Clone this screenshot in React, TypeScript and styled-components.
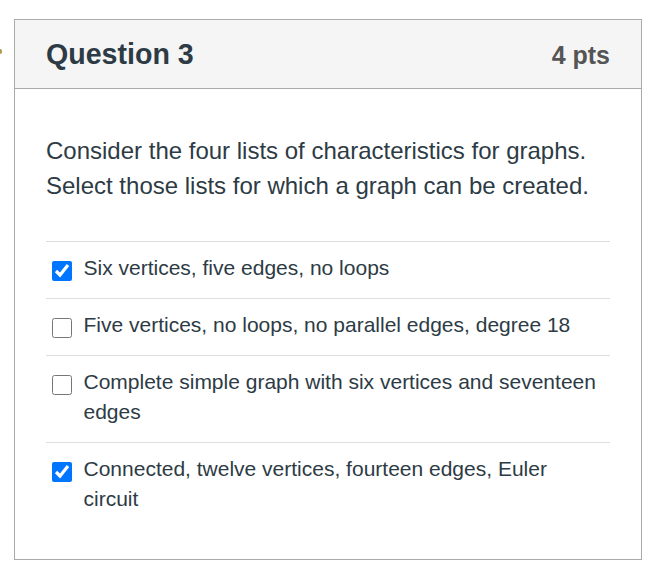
import styled, { createGlobalStyle } from "styled-components";

const GlobalStyle = createGlobalStyle`
  html, body {
    margin: 0;
    padding: 0;
    background: #ffffff;
  }
  body {
    font-family: "Liberation Sans", Arial, sans-serif;
    color: #2d3b45;
  }
`;

const Page = styled.div`
  position: relative;
  width: 658px;
  height: 574px;
  padding: 19px 16px 0 14px;
  box-sizing: border-box;
`;

const EdgeMark = styled.span`
  position: absolute;
  left: 0;
  top: 49px;
  width: 2px;
  height: 5px;
  border-radius: 0 2px 2px 0;
  background: #b09a4a;
`;

const Card = styled.div`
  border: 1px solid #aaaaaa;
  background: #ffffff;
`;

const Header = styled.div`
  display: flex;
  align-items: center;
  justify-content: space-between;
  height: 68px;
  padding: 0 31px;
  background: #f5f5f5;
  border-bottom: 1px solid #aaaaaa;
`;

const Title = styled.div`
  font-size: 28.6px;
  font-weight: bold;
  color: #2d3b45;
  padding-top: 1px;
`;

const Points = styled.div`
  font-size: 25px;
  font-weight: bold;
  color: #555555;
  padding-top: 2px;
`;

const Body = styled.div`
  padding: 44px 31px 30px;
`;

const Prompt = styled.p`
  margin: 0 0 38px;
  font-size: 24px;
  line-height: 35px;
  color: #2d3b45;
`;

const AnswerList = styled.div`
  display: flex;
  flex-direction: column;
`;

const AnswerRow = styled.label`
  display: flex;
  align-items: flex-start;
  gap: 12px;
  padding: 11px 10px 15px 6px;
  border-top: 1px solid #dddddd;
  font-size: 21px;
  line-height: 30px;
  color: #2d3b45;
`;

const Check = styled.input`
  flex: none;
  width: 19.5px;
  height: 19.5px;
  margin: 8px 0 0;
  accent-color: #0075ff;
`;

const AnswerText = styled.span`
  flex: 1;
`;

const answers = [
  { text: "Six vertices, five edges, no loops", checked: true },
  { text: "Five vertices, no loops, no parallel edges, degree 18", checked: false },
  { text: "Complete simple graph with six vertices and seventeen edges", checked: false },
  { text: "Connected, twelve vertices, fourteen edges, Euler circuit", checked: true },
];

export default function App() {
  return (
    <>
      <GlobalStyle />
      <Page>
        <EdgeMark />
        <Card>
          <Header>
            <Title>Question 3</Title>
            <Points>4 pts</Points>
          </Header>
          <Body>
            <Prompt>
              Consider the four lists of characteristics for graphs.
              <br />
              Select those lists for which a graph can be created.
            </Prompt>
            <AnswerList>
              {answers.map((a) => (
                <AnswerRow key={a.text}>
                  <Check type="checkbox" defaultChecked={a.checked} />
                  <AnswerText>{a.text}</AnswerText>
                </AnswerRow>
              ))}
            </AnswerList>
          </Body>
        </Card>
      </Page>
    </>
  );
}
